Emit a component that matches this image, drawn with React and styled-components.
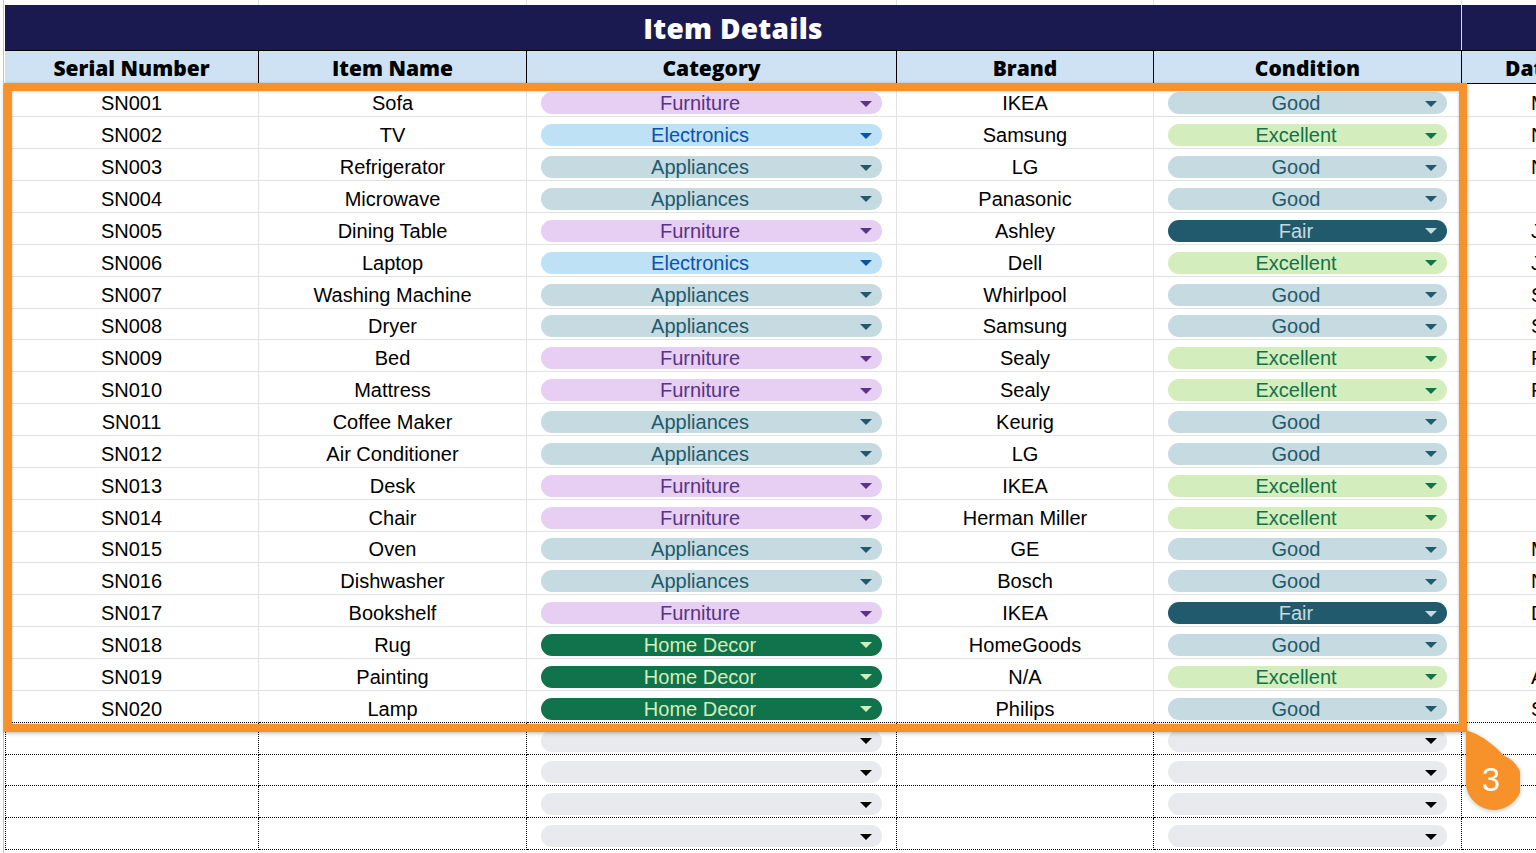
import React from 'react'
import styled, { createGlobalStyle } from 'styled-components'

const GlobalStyle = createGlobalStyle`
  html, body {
    margin: 0;
    padding: 0;
    background: #fff;
    overflow: hidden;
  }
  body {
    font-family: "Liberation Sans", Arial, sans-serif;
  }
  * { box-sizing: border-box; }
`

const COLS = '254px 268px 370px 257px 308px 262px'
const ROW_H = 31.86

const CHIP = {
	Furniture: { bg: '#e6cff2', fg: '#5a3286' },
	Electronics: { bg: '#bfe1f6', fg: '#0a53a8' },
	Appliances: { bg: '#c6dbe1', fg: '#215a6c' },
	'Home Decor': { bg: '#11734b', fg: '#d4edbc' },
	Good: { bg: '#c6dbe1', fg: '#215a6c' },
	Excellent: { bg: '#d4edbc', fg: '#11734b' },
	Fair: { bg: '#215a6c', fg: '#c6dbe1' },
	'': { bg: '#e8eaed', fg: '#000' },
}

const items = [
	['SN001', 'Sofa', 'Furniture', 'IKEA', 'Good', 'May 12, 2020'],
	['SN002', 'TV', 'Electronics', 'Samsung', 'Excellent', 'Nov 3, 2021'],
	['SN003', 'Refrigerator', 'Appliances', 'LG', 'Good', 'Nov 20, 2019'],
	['SN004', 'Microwave', 'Appliances', 'Panasonic', 'Good', ''],
	['SN005', 'Dining Table', 'Furniture', 'Ashley', 'Fair', 'Jun 8, 2018'],
	['SN006', 'Laptop', 'Electronics', 'Dell', 'Excellent', 'Jul 22, 2022'],
	['SN007', 'Washing Machine', 'Appliances', 'Whirlpool', 'Good', 'Sep 14, 2020'],
	['SN008', 'Dryer', 'Appliances', 'Samsung', 'Good', 'Sep 30, 2020'],
	['SN009', 'Bed', 'Furniture', 'Sealy', 'Excellent', 'Feb 2, 2017'],
	['SN010', 'Mattress', 'Furniture', 'Sealy', 'Excellent', 'Feb 2, 2017'],
	['SN011', 'Coffee Maker', 'Appliances', 'Keurig', 'Good', ''],
	['SN012', 'Air Conditioner', 'Appliances', 'LG', 'Good', ''],
	['SN013', 'Desk', 'Furniture', 'IKEA', 'Excellent', ''],
	['SN014', 'Chair', 'Furniture', 'Herman Miller', 'Excellent', ''],
	['SN015', 'Oven', 'Appliances', 'GE', 'Good', 'Mar 9, 2021'],
	['SN016', 'Dishwasher', 'Appliances', 'Bosch', 'Good', 'Nov 11, 2022'],
	['SN017', 'Bookshelf', 'Furniture', 'IKEA', 'Fair', 'Dec 1, 2019'],
	['SN018', 'Rug', 'Home Decor', 'HomeGoods', 'Good', ''],
	['SN019', 'Painting', 'Home Decor', 'N/A', 'Excellent', 'Aug 18, 2020'],
	['SN020', 'Lamp', 'Home Decor', 'Philips', 'Good', 'Sep 5, 2021'],
]

const Sheet = styled.div`
	position: relative;
	margin-left: 3px;
	padding-left: 1px;
	border-left: 1px solid #c4c4c4;
	width: 1800px;
	height: 853px;
`

const Row = styled.div`
	display: grid;
	grid-template-columns: ${COLS};
	height: ${p => p.$h}px;
`

const Body = styled.div`
	padding-top: 1.5px;
`

const Blank = styled.div`
	border-right: 1px solid #e2e2e2;
`

const Title = styled.div`
	grid-column: ${p => p.$span};
	background: #1b1a50;
	border-right: 1px solid #d9d9e3;
	color: #fff;
	font-family: "Open Sans", "DejaVu Sans", sans-serif;
	font-weight: 800;
	font-size: 28px;
	letter-spacing: 0.3px;
	display: flex;
	align-items: center;
	justify-content: center;
`

const HeadCell = styled.div`
	background: #cfe2f3;
	border-top: 1px solid #000;
	border-bottom: 1px solid #000;
	border-right: 1px solid #000;
	font-family: "Open Sans", "DejaVu Sans", sans-serif;
	font-weight: 800;
	font-size: 21px;
	line-height: 24px;
	color: #000;
	display: flex;
	align-items: flex-end;
	justify-content: ${p => (p.$left ? 'flex-start' : 'center')};
	padding: 0 0 3px ${p => (p.$left ? '43px' : '0')};
	white-space: nowrap;
	overflow: hidden;
`

const Cell = styled.div`
	border-right: 1px ${p => (p.$dotted ? 'dotted #000' : 'solid #e2e2e2')};
	border-bottom: 1px ${p => (p.$dotted || p.$last ? 'dotted #000' : 'solid #e2e2e2')};
	border-left: ${p => (p.$first && p.$dotted ? '1px dotted #000' : 'none')};
	display: flex;
	align-items: flex-end;
	justify-content: ${p => (p.$left ? 'flex-start' : 'center')};
	padding: 0 ${p => (p.$chip ? '14px' : '0')} 2px ${p => (p.$left ? '69px' : p.$chip ? '14px' : '0')};
	font-size: 20px;
	line-height: 22px;
	color: #000;
	white-space: nowrap;
	overflow: hidden;
`

const Chip = styled.div`
	flex: 1;
	height: 22px;
	border-radius: 11px;
	background: ${p => p.$bg};
	color: ${p => p.$fg};
	display: flex;
	align-items: center;
	font-size: 20px;
	line-height: 22px;
`

const ChipLabel = styled.span`
	flex: 1;
	text-align: center;
`

const Caret = styled.span`
	width: 0;
	height: 0;
	border-left: 6px solid transparent;
	border-right: 6px solid transparent;
	border-top: 6px solid ${p => p.$c};
	margin: 1px 10px 0 1px;
`

const Highlight = styled.div`
	position: absolute;
	left: 0;
	top: 83px;
	width: 1463px;
	height: 649px;
	border: 8px solid #f7922b;
	box-shadow: 0 1px 4px rgba(0, 0, 0, 0.3), inset 0 0 3px rgba(0, 0, 0, 0.25);
	pointer-events: none;
`

const Badge = styled.div`
	position: absolute;
	left: 1458px;
	top: 730px;
	width: 58px;
	height: 80px;
	filter: drop-shadow(0 1px 2px rgba(0, 0, 0, 0.25));
`

const BadgeNum = styled.span`
	position: absolute;
	left: 0;
	top: 33px;
	width: 58px;
	text-align: center;
	color: #fff;
	font-size: 33px;
	line-height: 34px;
`

function Dropdown({ value }) {
	const c = CHIP[value]
	return (
		<Chip $bg={c.bg} $fg={c.fg}>
			<ChipLabel>{value}</ChipLabel>
			<Caret $c={c.fg} />
		</Chip>
	)
}

export default function App() {
	return (
		<>
			<GlobalStyle />
			<Sheet>
				<Row $h={5}>
					{[0, 1, 2, 3, 4, 5].map(i => <Blank key={i} />)}
				</Row>
				<Row $h={45}>
					<Title $span="1 / 6">Item Details</Title>
					<Title $span="6 / 7" />
				</Row>
				<Row $h={34}>
					<HeadCell>Serial Number</HeadCell>
					<HeadCell>Item Name</HeadCell>
					<HeadCell>Category</HeadCell>
					<HeadCell>Brand</HeadCell>
					<HeadCell>Condition</HeadCell>
					<HeadCell $left>Date of Purchase</HeadCell>
				</Row>
				<Body>
					{items.map((r, i) => {
						const last = i === items.length - 1
						return (
							<Row key={r[0]} $h={ROW_H}>
								<Cell $last={last}>{r[0]}</Cell>
								<Cell $last={last}>{r[1]}</Cell>
								<Cell $last={last} $chip><Dropdown value={r[2]} /></Cell>
								<Cell $last={last}>{r[3]}</Cell>
								<Cell $last={last} $chip><Dropdown value={r[4]} /></Cell>
								<Cell $last={last} $left>{r[5]}</Cell>
							</Row>
						)
					})}
					{[0, 1, 2, 3].map(i => (
						<Row key={'e' + i} $h={ROW_H}>
							<Cell $dotted $first />
							<Cell $dotted />
							<Cell $dotted $chip><Dropdown value="" /></Cell>
							<Cell $dotted />
							<Cell $dotted $chip><Dropdown value="" /></Cell>
							<Cell $dotted $left />
						</Row>
					))}
				</Body>
				<Highlight />
				<Badge>
					<svg width="58" height="80" viewBox="0 0 58 80">
						<path d="M4 0 Q24 6 42 25.8 A28 28 0 1 1 4 50 Z" fill="#f7922b" />
					</svg>
					<BadgeNum>3</BadgeNum>
				</Badge>
			</Sheet>
		</>
	)
}
